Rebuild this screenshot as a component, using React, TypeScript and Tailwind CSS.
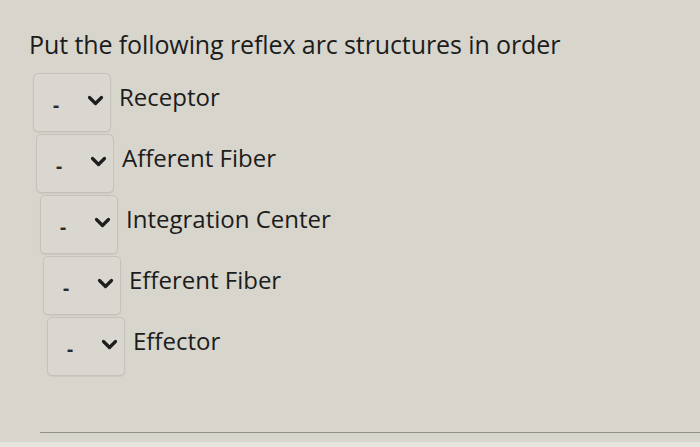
import React from "react";

const items = ["Receptor", "Afferent Fiber", "Integration Center", "Efferent Fiber", "Effector"];
const shifts = ["ml-[33px]", "ml-[36px]", "ml-[40px]", "ml-[43px]", "ml-[47px]"];

function Chevron() {
  return (
    <svg width="17" height="11" viewBox="0 0 17 11" className="shrink-0">
      <path d="M2.5 2.5 L8.5 8.5 L14.5 2.5" fill="none" stroke="#1e1e1e" strokeWidth="3.2" strokeLinecap="round" strokeLinejoin="round" />
    </svg>
  );
}

export default function App() {
  return (
    <div
      className="relative w-[700px] h-[447px] overflow-hidden bg-[#d7d5cc] text-[#1c1c1c]"
      style={{ fontFamily: '"Open Sans", "Noto Sans", sans-serif' }}
    >
      <div className="pt-[29px] pl-[29px]">
        <h1 className="text-[25px] leading-[30px] font-medium tracking-[-0.1px]">
          Put the following reflex arc structures in order
        </h1>
      </div>
      <div className="mt-[14px] flex flex-col gap-[2px]">
        {items.map((label, i) => (
          <div key={label} className={`flex items-center ${shifts[i]}`}>
            <div className="w-[78px] h-[59px] rounded-[5px] border border-[#c4c2ba] bg-[#d9d7cf] shadow-[0_1px_1px_rgba(0,0,0,0.06)] flex items-center pl-[19px] pr-[6px]">
              <span className="text-[19px] leading-none text-[#2a2a2a] font-bold mt-[6px]">-</span>
              <span className="ml-auto -mt-[4px]">
                <Chevron />
              </span>
            </div>
            <span className="ml-[8px] text-[24px] leading-[30px] font-medium -mt-[12px]">{label}</span>
          </div>
        ))}
      </div>
      <div className="absolute left-[40px] right-0 top-[432px] h-px bg-[#8f8f8c]" />
      <div className="absolute left-0 right-0 top-[442px] h-[5px] bg-[#e6e5e0]" />
    </div>
  );
}
